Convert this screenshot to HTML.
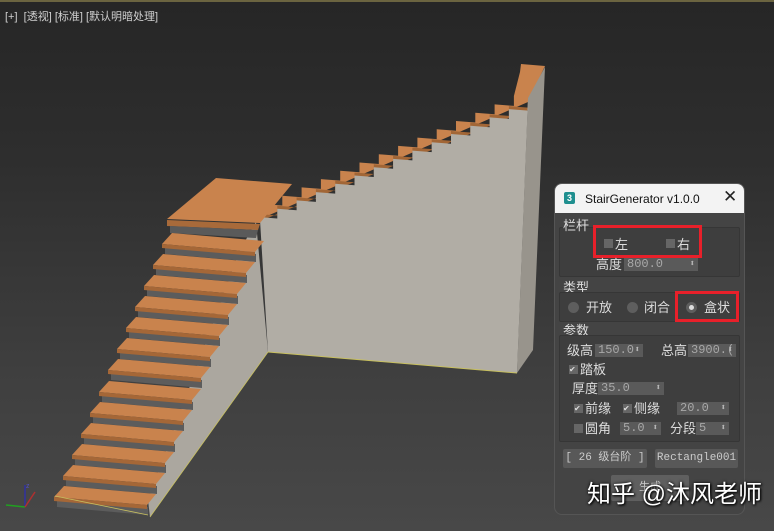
<!DOCTYPE html>
<html><head><meta charset="utf-8"><style>
*{margin:0;padding:0;box-sizing:border-box}
body{width:774px;height:531px;overflow:hidden;background:linear-gradient(#262626 0%,#2e2e2e 30%,#3f3f3f 70%,#484848 100%);font-family:"Liberation Sans","Noto Sans CJK SC",sans-serif;position:relative}
.t{position:absolute;color:#ddd;font-size:13px;white-space:nowrap;line-height:15px}
.vp{position:absolute;left:5px;top:8px;color:#cfcfcf;font-size:11px;font-family:"Liberation Sans","Noto Sans CJK SC",sans-serif}
#dlg{position:absolute;left:554px;top:183px;width:191px;height:332px;background:#444;border-radius:8px;overflow:hidden;border:1px solid #555}
#tb{position:absolute;left:0;top:0;width:100%;height:29px;background:#f3f3f3}
.g{position:absolute;border:1px solid #363636;background:#3e3e3e;border-radius:2px}
.red{position:absolute;border:3px solid #e8202a}
.cb{position:absolute;width:9px;height:9px;background:#666}
.sp{position:absolute;height:13px;background:#5a5a5a;color:#a8a8a8;font-size:12px;font-family:"Liberation Mono",monospace;line-height:13px;padding-left:3px;overflow:hidden}
.sp:after{content:"⬍";position:absolute;right:3px;top:0;color:#bbb;font-size:9px}
.rd{position:absolute;width:11px;height:11px;border-radius:50%;background:#5e5e5e}
.btn{position:absolute;height:19px;background:#585858;border-radius:2px;color:#ccc;font-size:11px;line-height:19px;text-align:center;font-family:"Liberation Mono","Noto Sans CJK SC",monospace}
</style></head><body>
<div style="position:absolute;left:0;top:0;width:774px;height:2px;background:#6b6440"></div>
<div class="vp">[+]&nbsp; [透视] [标准] [默认明暗处理]</div>
<svg width="774" height="531" style="position:absolute;left:0;top:0">
<!-- orange top of wall -->
<polygon fill="#c9834d" points="263,204 282.3,205.5 282.3,195.7 301.6,197.2 301.6,187.4 320.9,188.9 320.9,179.1 340.2,180.6 340.2,170.8 359.5,172.3 359.5,162.5 378.8,164 378.8,154.2 398.1,155.7 398.1,145.9 417.4,147.4 417.4,137.6 436.7,139.1 436.7,129.3 456,130.8 456,121 475.3,122.5 475.3,112.7 494.6,114.2 494.6,104.4 513.9,105.9 513.9,96 520,72 521,64 545,66 528,102 258,220"/>
<polygon fill="#a26636" points="258,214 277.3,215.5 277.3,205.7 296.6,207.2 296.6,197.4 315.9,198.9 315.9,189.1 335.2,190.6 335.2,180.8 354.5,182.3 354.5,172.5 373.8,174 373.8,164.2 393.1,165.7 393.1,155.9 412.4,157.4 412.4,147.6 431.7,149.1 431.7,139.3 451,140.8 451,131 470.3,132.5 470.3,122.7 489.6,124.2 489.6,114.4 508.9,115.9 508.9,106.1 528.2,107.6 528,110 258,222"/>
<!-- right face -->
<polygon fill="#98948c" points="528,98 545,67 533,350 517,373"/>
<!-- wall front -->
<polygon fill="#b1ada5" points="258,217 277.3,218.5 277.3,208.7 296.6,210.2 296.6,200.4 315.9,201.9 315.9,192.1 335.2,193.6 335.2,183.8 354.5,185.3 354.5,175.5 373.8,177 373.8,167.2 393.1,168.7 393.1,158.9 412.4,160.4 412.4,150.6 431.7,152.1 431.7,142.3 451,143.8 451,134 470.3,135.5 470.3,125.7 489.6,127.2 489.6,117.4 508.9,118.9 508.9,109.1 528.2,110.6 528,100 517,373 268,352 260,220"/>
<line x1="268" y1="352" x2="517" y2="373" stroke="#c8c060" stroke-width="1"/>
<!-- stair side face -->
<polygon fill="#aba79f" points="256,222 268,352 150,517 148,500 240,250"/>
<line x1="268" y1="352" x2="150" y2="517" stroke="#c8c060" stroke-width="0.8"/>
<!-- landing -->
<polygon fill="#a86a3a" points="167,220 260,224 258,230 167,226"/>
<polygon fill="#5a5a5a" points="170,226 258,230 256,238 170,233"/>
<polygon fill="#c9834d" points="167,219 216,178 292,184 260,223"/>
<defs>
<g id="st">
<polygon fill="#5c5c5c" points="3,8 94,16 94,24 3,16"/>
<polygon fill="#c9834d" points="0,6 10,-5 102,3 93,14"/>
<polygon fill="#a56737" points="0,6 93,14 93,18 0,10"/>
</g>
</defs>
<use href="#st" x="162" y="238"/>
<use href="#st" x="153" y="259"/>
<use href="#st" x="144" y="280"/>
<use href="#st" x="135" y="301"/>
<use href="#st" x="126" y="322"/>
<use href="#st" x="117" y="343"/>
<use href="#st" x="108" y="364"/>
<use href="#st" x="99" y="386"/>
<use href="#st" x="90" y="407"/>
<use href="#st" x="81" y="428"/>
<use href="#st" x="72" y="449"/>
<use href="#st" x="63" y="470"/>
<use href="#st" x="54" y="491"/>
<line x1="55" y1="496" x2="148" y2="515" stroke="#c8c060" stroke-width="0.8"/>
<!-- gizmo -->
<line x1="25" y1="507" x2="25" y2="485" stroke="#3030a0" stroke-width="1.5"/>
<line x1="25" y1="507" x2="6" y2="505" stroke="#20a020" stroke-width="1.5"/>
<line x1="25" y1="507" x2="35" y2="492" stroke="#b03030" stroke-width="1.5"/>
<text x="26" y="488" fill="#5050c0" font-size="7" font-family="Liberation Sans">z</text>
</svg>

<div id="dlg">
<div id="tb">
<div style="position:absolute;left:9px;top:8px;width:11px;height:12px;background:#1f8f8f;border-radius:2px;color:#fff;font-size:9px;line-height:12px;text-align:center;font-weight:bold">3</div>
<div class="t" style="left:30px;top:8px;color:#111;font-size:12px">StairGenerator v1.0.0</div>
<div class="t" style="left:168px;top:5px;color:#222;font-size:17px">✕</div>
</div>
<div class="g" style="left:4px;top:43px;width:181px;height:50px"></div>
<div class="t" style="left:8px;top:34px">栏杆</div>
<div class="cb" style="left:49px;top:55px"></div><div class="t" style="left:60px;top:53px">左</div>
<div class="cb" style="left:111px;top:55px"></div><div class="t" style="left:122px;top:53px">右</div>
<div class="red" style="left:38px;top:41px;width:109px;height:33px"></div>
<div class="t" style="left:41px;top:73px">高度</div>
<div class="sp" style="left:69px;top:74px;width:74px">800.0</div>

<div class="t" style="left:8px;top:96px">类型</div>
<div class="g" style="left:4px;top:108px;width:181px;height:30px"></div>
<div class="rd" style="left:13px;top:118px"></div><div class="t" style="left:31px;top:116px">开放</div>
<div class="rd" style="left:72px;top:118px"></div><div class="t" style="left:89px;top:116px">闭合</div>
<div class="rd" style="left:131px;top:118px;background:#ddd;border:3px solid #5e5e5e"></div><div class="t" style="left:149px;top:116px">盒状</div>
<div class="red" style="left:120px;top:107px;width:64px;height:31px"></div>

<div class="t" style="left:8px;top:139px">参数</div>
<div class="g" style="left:4px;top:151px;width:181px;height:107px"></div>
<div class="t" style="left:12px;top:159px">级高</div>
<div class="sp" style="left:40px;top:160px;width:48px">150.0</div>
<div class="t" style="left:106px;top:159px">总高</div>
<div class="sp" style="left:133px;top:160px;width:48px">3900.(</div>
<div class="cb" style="left:14px;top:181px;color:#ddd;font-size:8px;line-height:9px">✔</div><div class="t" style="left:25px;top:178px">踏板</div>
<div class="t" style="left:17px;top:197px">厚度</div>
<div class="sp" style="left:43px;top:198px;width:66px">35.0</div>
<div class="cb" style="left:19px;top:220px;color:#ddd;font-size:8px;line-height:9px">✔</div><div class="t" style="left:30px;top:217px">前缘</div>
<div class="cb" style="left:68px;top:220px;color:#ddd;font-size:8px;line-height:9px">✔</div><div class="t" style="left:79px;top:217px">侧缘</div>
<div class="sp" style="left:122px;top:218px;width:52px">20.0</div>
<div class="cb" style="left:19px;top:240px"></div><div class="t" style="left:30px;top:237px">圆角</div>
<div class="sp" style="left:65px;top:238px;width:41px">5.0</div>
<div class="t" style="left:115px;top:237px">分段</div>
<div class="sp" style="left:141px;top:238px;width:33px">5</div>
<div class="btn" style="left:8px;top:265px;width:84px">[ 26 级台阶 ]</div>
<div class="btn" style="left:100px;top:265px;width:83px">Rectangle001</div>
<div class="btn" style="left:56px;top:291px;width:78px;height:26px;background:#5f5f5f;line-height:26px">生成</div>
</div>
<div class="t" style="left:587px;top:481px;font-size:24px;line-height:28px;color:#fff;text-shadow:0 0 3px #000,1px 1px 2px #000">知乎 @沐风老师</div>
</body></html>
